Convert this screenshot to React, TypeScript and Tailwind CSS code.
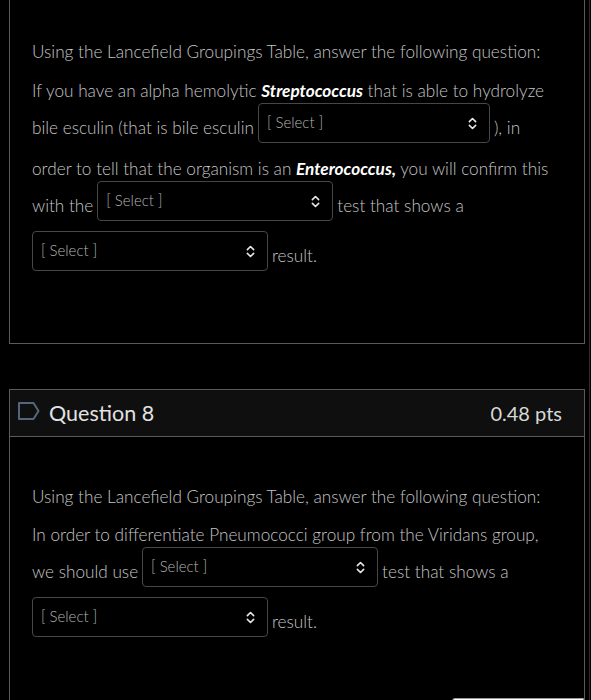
import { ChevronsUpDown } from 'lucide-react';

function Dropdown({ width = 'w-[236px]' }: { width?: string }) {
  return (
    <span
      className={`inline-flex align-middle items-center justify-between ${width} h-[40px] -mt-[2px] mb-[12px] mx-[4px] pl-[8px] pr-[9px] border border-[#474747] rounded-[4px] bg-black text-[15px] leading-none text-[#b4b4b4]`}
    >
      <span className="-mt-[2px]">[ Select ]</span>
      <ChevronsUpDown className="w-[15px] h-[15px] text-[#e6e6e6]" strokeWidth={2.6} />
    </span>
  );
}

export default function App() {
  return (
    <div className="min-h-screen w-full bg-black font-['Lato','Noto_Sans',sans-serif] font-light text-[17.2px] leading-[28px] text-[#c4c4c4]">
      <div className="w-[590px] border-r border-[#2c2c2c]">
        {/* Question 7 (top cut off) */}
        <div className="ml-[9px] w-[576px] border border-t-0 border-[#5a5a5a] pt-[38px] pb-[60px] pl-[22px] pr-[30px]">
          <p className="mb-[11px]">Using the Lancefield Groupings Table, answer the following question:</p>
          <p>
            If you have an alpha hemolytic <b className="italic font-bold text-white">Streptococcus</b> that is able to hydrolyze bile
            esculin (that is bile esculin
            <Dropdown width="w-[232px]" />
            ), in order to tell that the organism is an <b className="italic font-bold text-white">Enterococcus,</b> you will
            confirm this with the
            <Dropdown />
            test that shows a
            <span className="-ml-[4px]"><Dropdown /></span>
            result.
          </p>
        </div>

        {/* Question 8 */}
        <div className="ml-[9px] mt-[45px] w-[576px] border border-[#5a5a5a]">
          <div className="flex items-center justify-between h-[47px] bg-[#0f0f0f] border-b border-[#5a5a5a] pl-[7px] pr-[22px]">
            <div className="flex items-center gap-[8px]">
              <svg width="24" height="20" viewBox="0 0 24 20" fill="none" className="mt-[-4px]">
                <path d="M2 2 H16.5 L21.5 10 L16.5 18 H2 Z" stroke="#56667a" strokeWidth="2" strokeLinejoin="round" />
              </svg>
              <span className="text-[21.5px] font-normal text-[#e2e2e2]">Question 8</span>
            </div>
            <span className="text-[20px] font-normal text-[#d8d8d8]">0.48 pts</span>
          </div>
          <div className="pt-[46px] pl-[22px] pr-[30px]">
            <p className="mb-[10px]">Using the Lancefield Groupings Table, answer the following question:</p>
            <p>
              In order to differentiate Pneumococci group from the Viridans group, we should use
              <Dropdown />
              test that shows a
              <span className="-ml-[4px]"><Dropdown /></span>
              result.
            </p>
            <div className="flex justify-end mt-[49px] -mr-[30px]">
              <div className="w-[132px] h-[30px] bg-white border border-[#9a9a9a] rounded-tl-[3px]" />
            </div>
          </div>
        </div>
      </div>
    </div>
  );
}
